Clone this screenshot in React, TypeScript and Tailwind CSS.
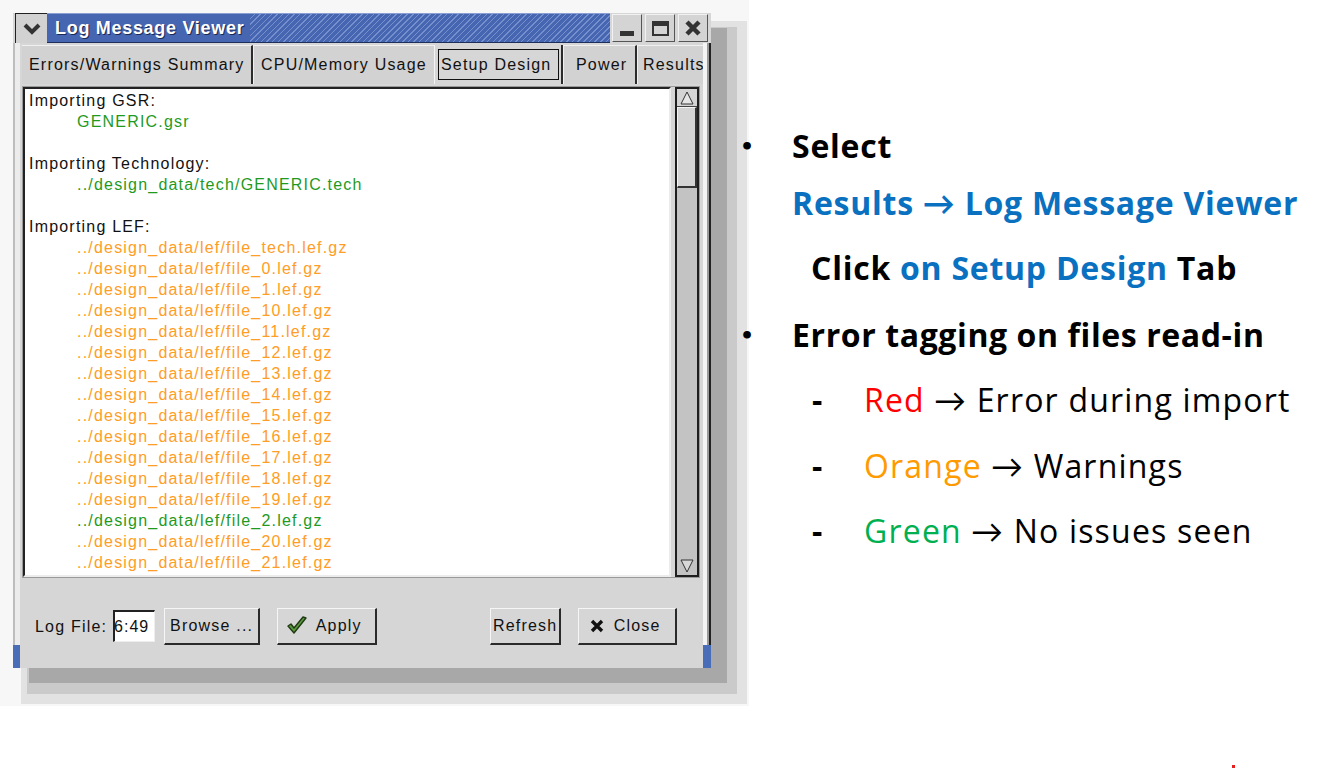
import React from "react";

type Line = { text: string; tone?: "black" | "green" | "orange"; indent?: boolean };

const lef = (n: string, tone: "green" | "orange" = "orange"): Line => ({
  text: `../design_data/lef/file_${n}.lef.gz`,
  tone,
  indent: true,
});

const LOG: Line[] = [
  { text: "Importing GSR:" },
  { text: "GENERIC.gsr", tone: "green", indent: true },
  { text: "" },
  { text: "Importing Technology:" },
  { text: "../design_data/tech/GENERIC.tech", tone: "green", indent: true },
  { text: "" },
  { text: "Importing LEF:" },
  lef("tech"),
  lef("0"),
  lef("1"),
  lef("10"),
  lef("11"),
  lef("12"),
  lef("13"),
  lef("14"),
  lef("15"),
  lef("16"),
  lef("17"),
  lef("18"),
  lef("19"),
  lef("2", "green"),
  lef("20"),
  lef("21"),
];

const toneClass = {
  black: "text-[#111111]",
  green: "text-[#1f9a1f]",
  orange: "text-[#ff9d26]",
};

function TitleButton({ children }: { children: React.ReactNode }) {
  return (
    <div className="flex h-[28px] w-[30px] shrink-0 items-center justify-center border border-t-[#f2f2f2] border-l-[#f2f2f2] border-r-[#555] border-b-[#555] bg-[#d4d4d4]">
      {children}
    </div>
  );
}

function Button({
  className,
  children,
}: {
  className: string;
  children: React.ReactNode;
}) {
  return (
    <div
      className={`flex h-[37px] shrink-0 items-center justify-center border-t border-l border-t-[#f6f6f6] border-l-[#f6f6f6] border-r-2 border-b-2 border-r-[#2a2a2a] border-b-[#2a2a2a] bg-[#d6d6d6] ${className}`}
    >
      {children}
    </div>
  );
}

function LogWindow() {
  return (
    <div className="flex h-[655px] w-[698px] flex-col bg-[#d6d6d6] font-['Liberation_Sans',Arial,sans-serif] text-[16px] tracking-[1.2px] text-[#111] shadow-[16px_15px_0_0_#a8a8a8,20px_20px_0_6px_#cacaca,22px_22px_0_14px_#e2e2e2,12px_12px_0_26px_#f7f7f7]">
      {/* title bar */}
      <div className="flex h-[30px] items-center">
        <div className="ml-[2px] flex h-[30px] w-[32px] shrink-0 items-center justify-center border-t border-l border-t-[#222] border-l-[#222] bg-[#d2d2d2]">
          <svg width="18" height="12" viewBox="0 0 18 12">
            <path d="M2 2 L9 9 L16 2" fill="none" stroke="#333" strokeWidth="4" />
          </svg>
        </div>
        <div className="flex h-[30px] min-w-0 flex-1 border-t border-b border-t-[#8aa0d4] border-b-[#1e2f5c] bg-[#4666b1]">
          <div className="flex items-center whitespace-nowrap pl-[8px] pr-[6px] text-[18px] font-bold tracking-[0.7px] text-white [text-shadow:1px_1px_0_#1b2a55]">
            Log Message Viewer
          </div>
          <div className="flex-1 bg-[repeating-linear-gradient(135deg,#4666b1_0px,#4666b1_3px,#7590cc_3px,#7590cc_4px)]" />
        </div>
        <div className="flex shrink-0 gap-[3px] pl-[2px] pr-[3px]">
          <TitleButton>
            <div className="mt-[10px] h-[5px] w-[14px] bg-[#333]" />
          </TitleButton>
          <TitleButton>
            <div className="h-[15px] w-[17px] border-2 border-t-[5px] border-[#333]" />
          </TitleButton>
          <TitleButton>
            <svg width="18" height="18" viewBox="0 0 18 18">
              <path d="M3 3 L15 15 M15 3 L3 15" stroke="#333" strokeWidth="4.5" />
            </svg>
          </TitleButton>
        </div>
      </div>

      {/* body */}
      <div className="flex min-h-0 flex-1">
        <div className="flex w-[7px] shrink-0 flex-col">
          <div className="flex-1 border-l-2 border-l-[#bdbdbd] bg-[#ececec]" />
          <div className="h-[23px] bg-[#4a6db8]" />
        </div>

        <div className="flex min-w-0 flex-1 flex-col">
          {/* tabs */}
          <div className="ml-[2px] mt-[2px] flex h-[39px] items-stretch overflow-hidden whitespace-nowrap">
            <div className="flex w-[231px] shrink-0 items-center border-t border-t-[#f0f0f0] border-r-2 border-r-[#2c2c2c] bg-[#d2d2d2] pl-[7px]">
              Errors/Warnings Summary
            </div>
            <div className="flex w-[182px] shrink-0 items-center border-t border-l border-t-[#f0f0f0] border-l-[#f0f0f0] border-r border-r-[#f4f4f4] bg-[#d2d2d2] pl-[7px]">
              CPU/Memory Usage
            </div>
            <div className="flex w-[128px] shrink-0 items-center border-r-2 border-r-[#2c2c2c] bg-[#d6d6d6] pl-[3px]">
              <div className="flex h-[31px] w-[121px] items-center border border-[#111] pl-[2px]">
                Setup Design
              </div>
            </div>
            <div className="flex w-[74px] shrink-0 items-center border-t border-l border-t-[#f0f0f0] border-l-[#f0f0f0] border-r-2 border-r-[#2c2c2c] bg-[#d2d2d2] pl-[12px]">
              Power
            </div>
            <div className="flex min-w-0 flex-1 items-center overflow-hidden border-t border-l border-t-[#f0f0f0] border-l-[#f0f0f0] bg-[#d2d2d2] pl-[5px]">
              Results
            </div>
          </div>

          {/* text area with scrollbar */}
          <div className="ml-[2px] mt-[2px] flex h-[492px] w-[678px] shrink-0 border border-[#9a9a9a] bg-[#d6d6d6]">
            <div className="h-full w-[648px] shrink-0 overflow-hidden border-2 border-t-[#222] border-l-[#222] border-r-[#ececec] border-b-[#ececec] bg-white pl-[4px] pt-[1px]">
              {LOG.map((l, i) => (
                <div
                  key={i}
                  className={`h-[21px] whitespace-nowrap leading-[21px] ${toneClass[l.tone ?? "black"]} ${l.indent ? "pl-[48px]" : ""}`}
                >
                  {l.text}
                </div>
              ))}
            </div>
            <div className="ml-[4px] flex h-full w-[24px] shrink-0 flex-col border-2 border-[#1e1e1e] bg-[#c3c3c3]">
              <div className="flex h-[18px] items-center justify-center border-b border-b-[#444] bg-[#d4d4d4]">
                <svg width="14" height="14" viewBox="0 0 14 14">
                  <path d="M7 1 L13 13 L1 13 Z" fill="#e6e6e6" stroke="#333" strokeWidth="1" />
                </svg>
              </div>
              <div className="h-[81px] border-t border-l border-t-[#f4f4f4] border-l-[#f4f4f4] border-r-2 border-b-2 border-r-[#333] border-b-[#333] bg-[#d4d4d4]" />
              <div className="flex-1" />
              <div className="flex h-[19px] items-center justify-center">
                <svg width="14" height="14" viewBox="0 0 14 14">
                  <path d="M1 1 L13 1 L7 13 Z" fill="#d8d8d8" stroke="#333" strokeWidth="1" />
                </svg>
              </div>
            </div>
          </div>

          {/* bottom controls */}
          <div className="flex items-start whitespace-nowrap pl-[15px] pt-[30px]">
            <div className="flex h-[37px] shrink-0 items-center">Log File:</div>
            <div className="ml-[6px] mt-[2px] flex h-[32px] w-[42px] shrink-0 items-center justify-end overflow-hidden border-t-2 border-l-2 border-t-[#222] border-l-[#222] border-r border-b border-r-[#eee] border-b-[#eee] bg-white pr-[5px] tracking-[1px]">
              6:49
            </div>
            <Button className="ml-[9px] w-[96px]">Browse ...</Button>
            <Button className="ml-[17px] w-[100px] gap-[8px] pr-[6px]">
              <svg width="22" height="20" viewBox="0 0 22 20">
                <path
                  d="M2 10 L8 17 L20 2 L17 1 L8 12 L5 8 Z"
                  fill="#5b9a3c"
                  stroke="#1f3a14"
                  strokeWidth="1.4"
                  strokeLinejoin="round"
                />
              </svg>
              Apply
            </Button>
            <Button className="ml-[113px] w-[71px]">Refresh</Button>
            <Button className="ml-[17px] w-[99px] gap-[10px] pr-[4px]">
              <svg width="14" height="14" viewBox="0 0 14 14">
                <path d="M2 2 L12 12 M12 2 L2 12" stroke="#111" strokeWidth="3.4" />
              </svg>
              Close
            </Button>
          </div>
        </div>

        <div className="flex w-[8px] shrink-0 flex-col">
          <div className="flex flex-1">
            <div className="w-[4px] bg-[#f4f4f4]" />
            <div className="w-[4px] border-r-2 border-r-[#222] bg-[#9a9a9a]" />
          </div>
          <div className="h-[23px] bg-[#4a6db8]" />
        </div>
      </div>
    </div>
  );
}

function Bullets() {
  return (
    <div className="flex flex-col whitespace-nowrap pt-[126px] font-['Open_Sans','Lato',sans-serif] text-[32px] text-black">
      <div className="flex h-[40px] items-center font-bold tracking-[0.75px]">
        <span className="w-[52px] font-['DejaVu_Sans',sans-serif] text-[22px]">•</span>
        <span>Select</span>
      </div>
      <div className="mt-[17px] flex h-[40px] items-center pl-[52px] font-bold tracking-[0.75px] text-[#0a70c0]">
        Results → Log Message Viewer
      </div>
      <div className="mt-[25px] flex h-[40px] items-center pl-[71px] font-bold tracking-[0.75px]">
        <span>Click</span>
        <span className="ml-[9px] text-[#0a70c0]">on Setup Design</span>
        <span className="ml-[9px]">Tab</span>
      </div>
      <div className="mt-[27px] flex h-[40px] items-center font-bold tracking-[0.6px]">
        <span className="w-[52px] font-['DejaVu_Sans',sans-serif] text-[22px]">•</span>
        <span>Error tagging on files read-in</span>
      </div>
      {[
        { c: "Red", cls: "text-[#ff0000]", rest: "Error during import", mt: "mt-[25px]" },
        { c: "Orange", cls: "text-[#ff9a00]", rest: "Warnings", mt: "mt-[26px]" },
        { c: "Green", cls: "text-[#00b050]", rest: "No issues seen", mt: "mt-[25px]" },
      ].map((r) => (
        <div key={r.c} className={`${r.mt} flex h-[40px] items-center pl-[72px] tracking-[1.2px]`}>
          <span className="w-[52px] font-bold">-</span>
          <span className={r.cls}>{r.c}</span>
          <span className="ml-[9px]">→ {r.rest}</span>
        </div>
      ))}
    </div>
  );
}

export default function App() {
  return (
    <div className="relative flex h-[770px] w-[1344px] overflow-hidden bg-white">
      <div className="shrink-0 pl-[13px] pt-[13px]">
        <LogWindow />
      </div>
      <div className="ml-[29px]">
        <Bullets />
      </div>
      <div className="absolute left-[1232px] top-[765px] h-[3px] w-[3px] bg-[#e52020]" />
    </div>
  );
}
